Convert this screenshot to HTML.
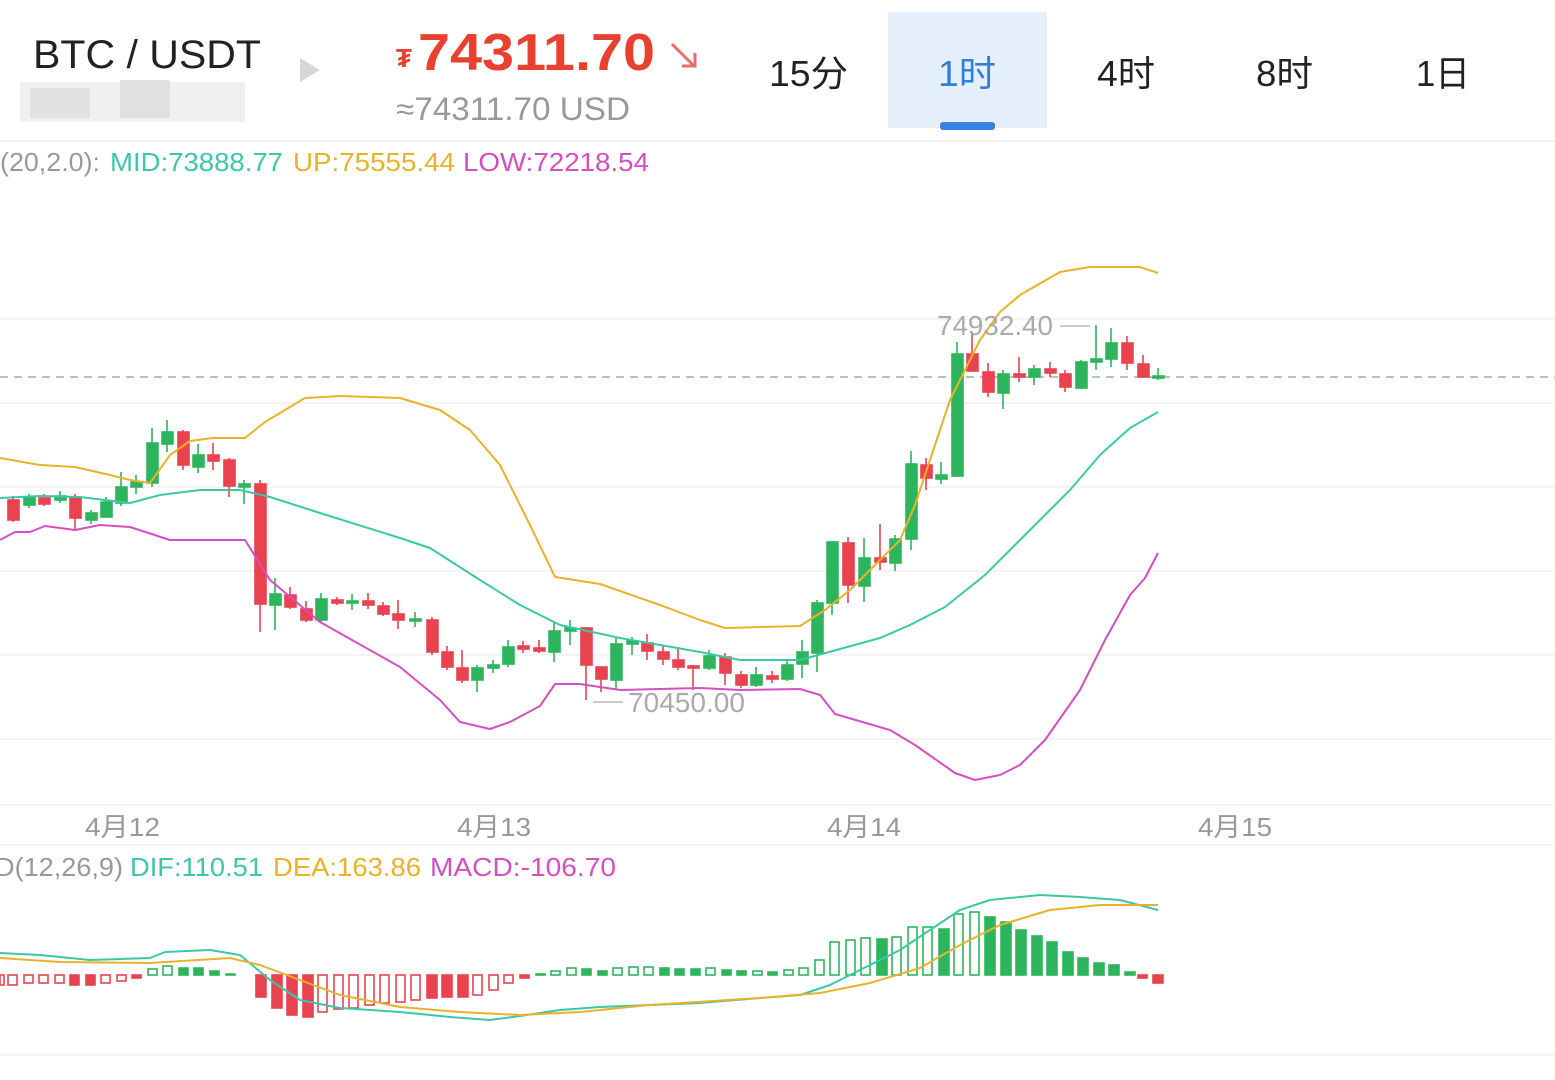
<!DOCTYPE html>
<html><head><meta charset="utf-8"><style>
html,body{margin:0;padding:0;background:#fff;overflow:hidden}
svg{display:block}
text{font-family:"Liberation Sans","Noto Sans CJK SC",sans-serif}
</style></head><body>
<svg width="1555" height="1080" viewBox="0 0 1555 1080" xmlns="http://www.w3.org/2000/svg">
<rect width="1555" height="1080" fill="#fff"/>
<!-- header -->
<text x="33" y="68" font-size="40" fill="#222" textLength="228" lengthAdjust="spacingAndGlyphs">BTC / USDT</text>
<rect x="20" y="82" width="225" height="40" fill="#ececec" opacity="0.8"/>
<rect x="30" y="88" width="60" height="30" fill="#e2e2e2"/>
<rect x="120" y="80" width="50" height="38" fill="#e0e0e0"/>
<path d="M300 58 L320 70 L300 82 Z" fill="#d6d6d6"/>
<text x="396" y="67" font-size="26" font-weight="bold" fill="#e8412f">₮</text>
<text x="418" y="70" font-size="52" font-weight="bold" fill="#e8412f" textLength="237" lengthAdjust="spacingAndGlyphs">74311.70</text>
<path d="M672 44 L694 66 M682 66 L695 66 L695 53" stroke="#ea6b6b" stroke-width="3" fill="none"/>
<text x="396" y="120" font-size="32" fill="#999" textLength="234" lengthAdjust="spacingAndGlyphs">≈74311.70 USD</text>
<rect x="888" y="12" width="159" height="116" fill="#e6f0fc"/>
<rect x="940" y="122" width="55" height="8" rx="3" fill="#3a80e0"/>
<g font-size="36" fill="#222">
<text x="769" y="86" textLength="79" lengthAdjust="spacingAndGlyphs">15分</text>
<text x="938" y="86" fill="#2f7fe0" textLength="58" lengthAdjust="spacingAndGlyphs">1时</text>
<text x="1097" y="86" textLength="58" lengthAdjust="spacingAndGlyphs">4时</text>
<text x="1256" y="86" textLength="57" lengthAdjust="spacingAndGlyphs">8时</text>
<text x="1416" y="86" textLength="54" lengthAdjust="spacingAndGlyphs">1日</text>
</g>
<line x1="0" y1="141" x2="1555" y2="141" stroke="#eee" stroke-width="1.5"/>
<!-- BOLL legend -->
<g font-size="26">
<text x="0" y="171" fill="#999" textLength="100" lengthAdjust="spacingAndGlyphs">(20,2.0):</text>
<text x="110" y="171" fill="#3cc8a8" textLength="173" lengthAdjust="spacingAndGlyphs">MID:73888.77</text>
<text x="293" y="171" fill="#e8b32a" textLength="162" lengthAdjust="spacingAndGlyphs">UP:75555.44</text>
<text x="463" y="171" fill="#d44fc0" textLength="186" lengthAdjust="spacingAndGlyphs">LOW:72218.54</text>
</g>
<!-- grid -->
<g stroke="#f0f0f0" stroke-width="1.5">
<line x1="0" y1="319" x2="1555" y2="319"/><line x1="0" y1="403" x2="1555" y2="403"/>
<line x1="0" y1="487" x2="1555" y2="487"/><line x1="0" y1="571" x2="1555" y2="571"/>
<line x1="0" y1="655" x2="1555" y2="655"/><line x1="0" y1="739" x2="1555" y2="739"/>
<line x1="0" y1="805" x2="1555" y2="805"/><line x1="0" y1="845" x2="1555" y2="845"/>
<line x1="0" y1="1055" x2="1555" y2="1055"/>
</g>
<line x1="0" y1="377" x2="1555" y2="377" stroke="#aaa" stroke-width="1.5" stroke-dasharray="8 6"/>
<!-- candles -->
<g stroke-width="1.6">
<g fill="#e8434f" stroke="#e8434f">
<line x1="13" y1="496" x2="13" y2="522"/><rect x="8" y="500" width="11" height="20"/>
<line x1="44" y1="494" x2="44" y2="506"/><rect x="39" y="498" width="11" height="6"/>
<line x1="75" y1="494" x2="75" y2="530"/><rect x="70" y="497" width="11" height="21"/>
<line x1="183" y1="430" x2="183" y2="470"/><rect x="178" y="432" width="11" height="33"/>
<line x1="213" y1="443" x2="213" y2="470"/><rect x="208" y="455" width="11" height="6"/>
<line x1="229" y1="458" x2="229" y2="497"/><rect x="224" y="460" width="11" height="26"/>
<line x1="260" y1="480" x2="260" y2="632"/><rect x="255" y="484" width="11" height="120"/>
<line x1="290" y1="587" x2="290" y2="609"/><rect x="285" y="595" width="11" height="12"/>
<line x1="306" y1="601" x2="306" y2="622"/><rect x="301" y="609" width="11" height="11"/>
<line x1="337" y1="597" x2="337" y2="605"/><rect x="332" y="600" width="11" height="3"/>
<line x1="368" y1="593" x2="368" y2="609"/><rect x="363" y="601" width="11" height="4"/>
<line x1="383" y1="602" x2="383" y2="616"/><rect x="378" y="606" width="11" height="8"/>
<line x1="398" y1="600" x2="398" y2="629"/><rect x="393" y="614" width="11" height="6"/>
<line x1="432" y1="617" x2="432" y2="655"/><rect x="427" y="620" width="11" height="32"/>
<line x1="447" y1="646" x2="447" y2="670"/><rect x="442" y="652" width="11" height="15"/>
<line x1="462" y1="650" x2="462" y2="683"/><rect x="457" y="668" width="11" height="12"/>
<line x1="523" y1="641" x2="523" y2="653"/><rect x="518" y="646" width="11" height="3"/>
<line x1="539" y1="640" x2="539" y2="653"/><rect x="534" y="648" width="11" height="3"/>
<line x1="586" y1="627" x2="586" y2="700"/><rect x="581" y="628" width="11" height="37"/>
<line x1="601" y1="667" x2="601" y2="692"/><rect x="596" y="667" width="11" height="12"/>
<line x1="647" y1="634" x2="647" y2="660"/><rect x="642" y="643" width="11" height="8"/>
<line x1="663" y1="645" x2="663" y2="665"/><rect x="658" y="652" width="11" height="7"/>
<line x1="678" y1="647" x2="678" y2="670"/><rect x="673" y="660" width="11" height="7"/>
<line x1="693" y1="665" x2="693" y2="690"/><rect x="688" y="666" width="11" height="2"/>
<line x1="725" y1="653" x2="725" y2="685"/><rect x="720" y="657" width="11" height="16"/>
<line x1="741" y1="671" x2="741" y2="688"/><rect x="736" y="675" width="11" height="10"/>
<line x1="772" y1="671" x2="772" y2="683"/><rect x="767" y="676" width="11" height="3"/>
<line x1="848" y1="537" x2="848" y2="603"/><rect x="843" y="543" width="11" height="42"/>
<line x1="880" y1="524" x2="880" y2="570"/><rect x="875" y="558" width="11" height="4"/>
<line x1="926" y1="458" x2="926" y2="490"/><rect x="921" y="465" width="11" height="13"/>
<line x1="972" y1="332" x2="972" y2="371"/><rect x="967" y="354" width="11" height="17"/>
<line x1="988" y1="363" x2="988" y2="397"/><rect x="983" y="372" width="11" height="20"/>
<line x1="1019" y1="357" x2="1019" y2="382"/><rect x="1014" y="374" width="11" height="3"/>
<line x1="1050" y1="362" x2="1050" y2="377"/><rect x="1045" y="369" width="11" height="4"/>
<line x1="1065" y1="370" x2="1065" y2="392"/><rect x="1060" y="374" width="11" height="13"/>
<line x1="1127" y1="336" x2="1127" y2="370"/><rect x="1122" y="343" width="11" height="20"/>
<line x1="1143" y1="355" x2="1143" y2="378"/><rect x="1138" y="364" width="11" height="13"/>
</g>
<g fill="#2db55d" stroke="#2db55d">
<line x1="29" y1="494" x2="29" y2="508"/><rect x="24" y="497" width="11" height="8"/>
<line x1="60" y1="491" x2="60" y2="503"/><rect x="55" y="496" width="11" height="4"/>
<line x1="91" y1="510" x2="91" y2="524"/><rect x="86" y="513" width="11" height="7"/>
<line x1="106" y1="497" x2="106" y2="518"/><rect x="101" y="502" width="11" height="15"/>
<line x1="121" y1="472" x2="121" y2="506"/><rect x="116" y="487" width="11" height="16"/>
<line x1="136" y1="475" x2="136" y2="494"/><rect x="131" y="482" width="11" height="5"/>
<line x1="152" y1="428" x2="152" y2="487"/><rect x="147" y="443" width="11" height="40"/>
<line x1="167" y1="420" x2="167" y2="452"/><rect x="162" y="432" width="11" height="12"/>
<line x1="198" y1="444" x2="198" y2="473"/><rect x="193" y="455" width="11" height="12"/>
<line x1="244" y1="480" x2="244" y2="504"/><rect x="239" y="484" width="11" height="3"/>
<line x1="275" y1="578" x2="275" y2="630"/><rect x="270" y="594" width="11" height="11"/>
<line x1="321" y1="593" x2="321" y2="623"/><rect x="316" y="599" width="11" height="21"/>
<line x1="352" y1="594" x2="352" y2="610"/><rect x="347" y="601" width="11" height="2"/>
<line x1="415" y1="612" x2="415" y2="627"/><rect x="410" y="619" width="11" height="2"/>
<line x1="477" y1="665" x2="477" y2="692"/><rect x="472" y="668" width="11" height="12"/>
<line x1="493" y1="660" x2="493" y2="673"/><rect x="488" y="665" width="11" height="3"/>
<line x1="508" y1="640" x2="508" y2="667"/><rect x="503" y="647" width="11" height="17"/>
<line x1="554" y1="622" x2="554" y2="662"/><rect x="549" y="631" width="11" height="21"/>
<line x1="570" y1="620" x2="570" y2="645"/><rect x="565" y="628" width="11" height="3"/>
<line x1="616" y1="637" x2="616" y2="690"/><rect x="611" y="644" width="11" height="36"/>
<line x1="632" y1="637" x2="632" y2="655"/><rect x="627" y="641" width="11" height="3"/>
<line x1="709" y1="650" x2="709" y2="670"/><rect x="704" y="656" width="11" height="12"/>
<line x1="756" y1="667" x2="756" y2="687"/><rect x="751" y="675" width="11" height="10"/>
<line x1="787" y1="660" x2="787" y2="681"/><rect x="782" y="665" width="11" height="14"/>
<line x1="802" y1="640" x2="802" y2="678"/><rect x="797" y="652" width="11" height="12"/>
<line x1="817" y1="600" x2="817" y2="672"/><rect x="812" y="603" width="11" height="50"/>
<line x1="832" y1="541" x2="832" y2="615"/><rect x="827" y="542" width="11" height="61"/>
<line x1="864" y1="538" x2="864" y2="602"/><rect x="859" y="558" width="11" height="28"/>
<line x1="895" y1="535" x2="895" y2="571"/><rect x="890" y="539" width="11" height="24"/>
<line x1="911" y1="451" x2="911" y2="550"/><rect x="906" y="464" width="11" height="75"/>
<line x1="941" y1="462" x2="941" y2="484"/><rect x="936" y="475" width="11" height="4"/>
<line x1="957" y1="342" x2="957" y2="477"/><rect x="952" y="354" width="11" height="122"/>
<line x1="1003" y1="370" x2="1003" y2="409"/><rect x="998" y="374" width="11" height="19"/>
<line x1="1034" y1="365" x2="1034" y2="385"/><rect x="1029" y="369" width="11" height="8"/>
<line x1="1081" y1="360" x2="1081" y2="389"/><rect x="1076" y="362" width="11" height="26"/>
<line x1="1096" y1="325" x2="1096" y2="370"/><rect x="1091" y="359" width="11" height="3"/>
<line x1="1111" y1="328" x2="1111" y2="367"/><rect x="1106" y="343" width="11" height="16"/>
<line x1="1158" y1="368" x2="1158" y2="380"/><rect x="1153" y="376" width="11" height="2"/>
</g>
</g>
<!-- bollinger -->
<g fill="none" stroke-width="2" stroke-linejoin="round">
<polyline stroke="#e8b32a" points="0,458 40,465 75,467 110,475 130,480 150,483 170,455 190,441 213,438 245,438 265,422 305,398 340,396 400,398 440,410 470,430 500,465 530,525 555,577 600,584 660,605 700,620 725,628 800,626 825,610 850,590 880,560 900,540 915,505 930,460 950,400 980,340 1000,312 1020,295 1060,272 1090,267 1140,267 1158,273"/>
<polyline stroke="#3cc8a8" points="0,498 40,496 80,497 130,503 160,495 200,490 240,490 270,497 320,513 400,538 430,548 480,580 520,605 560,625 620,638 700,652 740,660 800,660 840,649 880,638 910,625 945,607 985,575 1030,530 1070,490 1100,455 1130,428 1158,412"/>
<polyline stroke="#d44fc0" points="0,540 15,532 30,532 45,526 75,530 100,525 130,527 170,540 200,540 245,540 270,580 320,622 400,667 440,700 460,722 490,729 510,722 540,706 555,684 580,684 620,690 700,688 740,690 800,689 820,695 835,714 890,730 915,745 955,773 975,780 1000,775 1020,765 1045,740 1080,690 1105,640 1130,595 1145,578 1158,553"/>
</g>
<!-- price labels -->
<text x="937" y="335" font-size="28" fill="#aaa" textLength="116" lengthAdjust="spacingAndGlyphs">74932.40</text>
<line x1="1060" y1="326" x2="1090" y2="326" stroke="#bbb" stroke-width="1.5"/>
<text x="628" y="712" font-size="28" fill="#aaa" textLength="117" lengthAdjust="spacingAndGlyphs">70450.00</text>
<line x1="593" y1="702" x2="623" y2="702" stroke="#bbb" stroke-width="1.5"/>
<!-- dates -->
<g font-size="26" fill="#999">
<text x="85" y="836" textLength="75" lengthAdjust="spacingAndGlyphs">4月12</text>
<text x="457" y="836" textLength="74" lengthAdjust="spacingAndGlyphs">4月13</text>
<text x="827" y="836" textLength="74" lengthAdjust="spacingAndGlyphs">4月14</text>
<text x="1198" y="836" textLength="74" lengthAdjust="spacingAndGlyphs">4月15</text>
</g>
<!-- MACD legend -->
<g font-size="26">
<text x="-5" y="876" fill="#999" textLength="128" lengthAdjust="spacingAndGlyphs">D(12,26,9)</text>
<text x="130" y="876" fill="#3cc8a8" textLength="133" lengthAdjust="spacingAndGlyphs">DIF:110.51</text>
<text x="273" y="876" fill="#e8b32a" textLength="148" lengthAdjust="spacingAndGlyphs">DEA:163.86</text>
<text x="430" y="876" fill="#d44fc0" textLength="186" lengthAdjust="spacingAndGlyphs">MACD:-106.70</text>
</g>
<!-- MACD histogram -->
<g stroke-width="1.6">
<g fill="#e8434f" stroke="#e8434f">
<rect x="0" y="975" width="4" height="10" fill="none"/>
<rect x="8" y="975" width="9" height="10" fill="none"/><rect x="24" y="975" width="9" height="8" fill="none"/>
<rect x="39" y="975" width="9" height="8" fill="none"/><rect x="55" y="975" width="9" height="8" fill="none"/>
<rect x="70" y="975" width="9" height="10"/><rect x="86" y="975" width="9" height="10"/>
<rect x="101" y="975" width="9" height="8" fill="none"/><rect x="117" y="975" width="9" height="6" fill="none"/>
<rect x="132" y="975" width="9" height="3"/>
<rect x="256" y="975" width="10" height="22"/><rect x="272" y="975" width="10" height="33"/>
<rect x="287" y="975" width="10" height="40"/><rect x="303" y="975" width="10" height="42"/>
<rect x="318" y="975" width="9" height="37" fill="none"/><rect x="334" y="975" width="9" height="34" fill="none"/>
<rect x="349" y="975" width="9" height="33" fill="none"/><rect x="365" y="975" width="9" height="30" fill="none"/>
<rect x="380" y="975" width="9" height="28" fill="none"/><rect x="396" y="975" width="9" height="27" fill="none"/>
<rect x="411" y="975" width="9" height="25" fill="none"/><rect x="427" y="975" width="10" height="23"/>
<rect x="442" y="975" width="10" height="22"/><rect x="458" y="975" width="10" height="22"/>
<rect x="473" y="975" width="9" height="20" fill="none"/><rect x="489" y="975" width="9" height="15" fill="none"/>
<rect x="504" y="975" width="9" height="8" fill="none"/><rect x="520" y="975" width="9" height="3"/>
<rect x="1138" y="975" width="9" height="3"/><rect x="1153" y="975" width="10" height="8"/>
</g>
<g fill="#2db55d" stroke="#2db55d">
<rect x="148" y="969" width="9" height="6" fill="none"/><rect x="163" y="966" width="9" height="9" fill="none"/>
<rect x="179" y="968" width="9" height="7"/><rect x="194" y="968" width="9" height="7"/>
<rect x="210" y="971" width="9" height="4"/><rect x="226" y="974" width="9" height="1"/>
<rect x="536" y="974" width="9" height="1"/><rect x="551" y="971" width="9" height="4" fill="none"/>
<rect x="567" y="968" width="9" height="7" fill="none"/><rect x="582" y="969" width="9" height="6"/>
<rect x="598" y="971" width="9" height="4"/><rect x="613" y="968" width="9" height="7" fill="none"/>
<rect x="629" y="967" width="9" height="8" fill="none"/><rect x="644" y="967" width="9" height="8" fill="none"/>
<rect x="660" y="968" width="9" height="7"/><rect x="675" y="969" width="9" height="6"/>
<rect x="691" y="969" width="9" height="6"/><rect x="706" y="968" width="9" height="7" fill="none"/>
<rect x="722" y="970" width="9" height="5"/><rect x="737" y="971" width="9" height="4"/>
<rect x="753" y="971" width="9" height="4" fill="none"/><rect x="768" y="972" width="9" height="3"/>
<rect x="784" y="970" width="9" height="5" fill="none"/><rect x="799" y="968" width="9" height="7" fill="none"/>
<rect x="815" y="960" width="9" height="15" fill="none"/><rect x="830" y="942" width="9" height="33" fill="none"/>
<rect x="846" y="940" width="9" height="35" fill="none"/><rect x="861" y="938" width="9" height="37" fill="none"/>
<rect x="877" y="939" width="10" height="36"/><rect x="892" y="937" width="9" height="38" fill="none"/>
<rect x="908" y="927" width="9" height="48" fill="none"/><rect x="923" y="927" width="9" height="48" fill="none"/>
<rect x="939" y="929" width="10" height="46"/><rect x="954" y="914" width="9" height="61" fill="none"/>
<rect x="970" y="912" width="9" height="63" fill="none"/><rect x="985" y="917" width="10" height="58"/>
<rect x="1001" y="922" width="10" height="53"/><rect x="1016" y="930" width="10" height="45"/>
<rect x="1032" y="936" width="10" height="39"/><rect x="1047" y="942" width="10" height="33"/>
<rect x="1063" y="952" width="10" height="23"/><rect x="1078" y="958" width="10" height="17"/>
<rect x="1094" y="963" width="10" height="12"/><rect x="1109" y="965" width="10" height="10"/>
<rect x="1125" y="972" width="10" height="3"/>
</g>
</g>
<g fill="none" stroke-width="2" stroke-linejoin="round">
<polyline stroke="#3cc8a8" points="0,953 40,955 90,960 150,958 165,952 210,950 240,955 270,980 300,1000 340,1008 400,1012 450,1017 490,1020 520,1016 560,1010 600,1007 700,1003 760,998 800,995 830,985 870,965 900,950 930,930 960,910 990,900 1040,895 1080,897 1120,900 1158,910"/>
<polyline stroke="#e8b32a" points="0,958 60,962 150,963 230,958 260,965 300,980 340,995 400,1007 460,1012 520,1015 580,1012 650,1005 760,998 820,993 870,983 920,968 960,945 1000,925 1050,910 1100,905 1158,905"/>
</g>
</svg>
</body></html>
